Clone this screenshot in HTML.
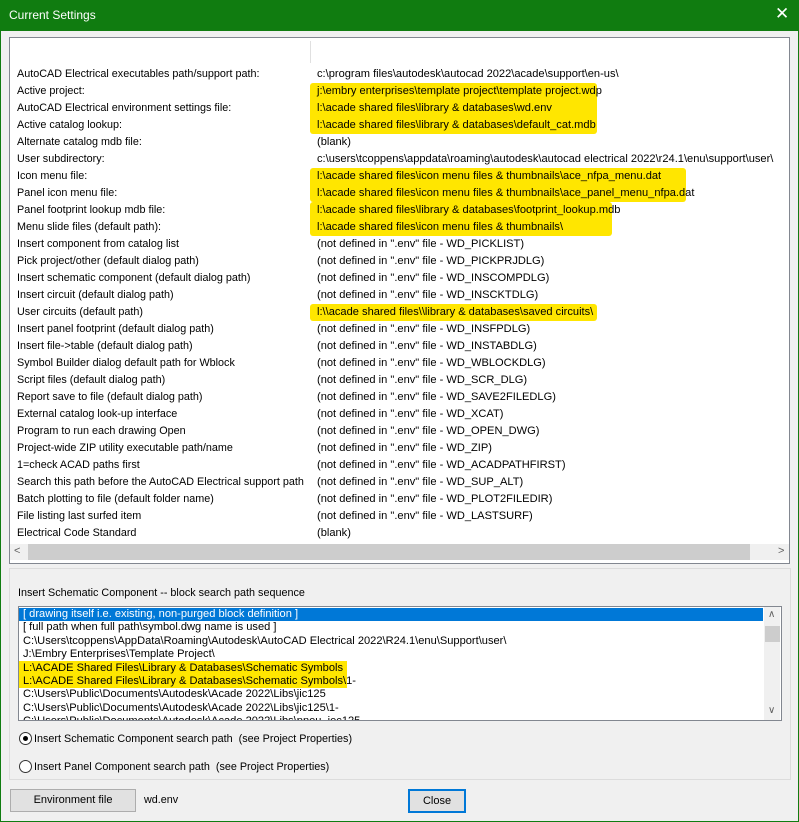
<!DOCTYPE html><html><head><style>
body{margin:0;width:799px;height:822px;background:#f0f0f0;font-family:"Liberation Sans",sans-serif;font-size:10.8px;color:#000;position:relative;overflow:hidden}
.a{position:absolute}
#title{left:0;top:0;width:799px;height:31px;background:#107c10;color:#fff;font-size:12px}
#frame{left:0;top:0;width:797px;height:820px;border:1px solid #107c10}
#box{left:9px;top:37px;width:779px;height:525px;background:#fff;border:1px solid #828790;overflow:hidden}
.r{position:absolute;left:7px;height:17px;line-height:17px;white-space:nowrap}
.v{position:absolute;left:300px;height:17px;line-height:17px;white-space:nowrap;padding-left:7px;font-size:11.1px}
.y{background:#ffe600}
#hs{left:10px;top:544px;width:779px;height:16px;background:#f0f0f0}
#grp{left:9px;top:568px;width:780px;height:210px;border:1px solid #dcdcdc}
#lb{left:18px;top:606px;width:762px;height:113px;background:#fff;border:1px solid #828790;overflow:hidden}
.l{position:absolute;left:2px;height:13.4px;line-height:13px;white-space:nowrap;font-size:11.1px;padding-left:2px}
.btn{position:absolute;background:#e1e1e1;border:1px solid #adadad;text-align:center;line-height:20px;font-size:11px}
.rad{position:absolute;width:11px;height:11px;border:1px solid #333;border-radius:50%;background:#fff}
</style></head><body>
<div class="a" id="frame"></div>
<div class="a" id="title"><span class="a" style="left:9px;top:8px">Current Settings</span><span class="a" style="left:775px;top:4px;font-size:17px">✕</span></div>
<div class="a" id="box">
<div class="a" style="left:300px;top:3px;width:1px;height:22px;background:#e0e0e0"></div>
<div class="a y" style="left:300px;top:45px;width:287px;height:51px;border-radius:3px"></div>
<div class="a y" style="left:300px;top:130px;width:376px;height:34px;border-radius:3px"></div>
<div class="a y" style="left:300px;top:164px;width:302px;height:34px;border-radius:3px"></div>
<div class="a y" style="left:300px;top:266px;width:287px;height:17px;border-radius:3px"></div>
<div class="r" style="top:28px">AutoCAD Electrical executables path/support path:</div><div class="v" style="top:28px">c:\program files\autodesk\autocad 2022\acade\support\en-us\</div>
<div class="r" style="top:45px">Active project:</div><div class="v" style="top:45px">j:\embry enterprises\template project\template project.wdp</div>
<div class="r" style="top:62px">AutoCAD Electrical environment settings file:</div><div class="v" style="top:62px">l:\acade shared files\library &amp; databases\wd.env</div>
<div class="r" style="top:79px">Active catalog lookup:</div><div class="v" style="top:79px">l:\acade shared files\library &amp; databases\default_cat.mdb</div>
<div class="r" style="top:96px">Alternate catalog mdb file:</div><div class="v" style="top:96px">(blank)</div>
<div class="r" style="top:113px">User subdirectory:</div><div class="v" style="top:113px">c:\users\tcoppens\appdata\roaming\autodesk\autocad electrical 2022\r24.1\enu\support\user\</div>
<div class="r" style="top:130px">Icon menu file:</div><div class="v" style="top:130px">l:\acade shared files\icon menu files &amp; thumbnails\ace_nfpa_menu.dat</div>
<div class="r" style="top:147px">Panel icon menu file:</div><div class="v" style="top:147px">l:\acade shared files\icon menu files &amp; thumbnails\ace_panel_menu_nfpa.dat</div>
<div class="r" style="top:164px">Panel footprint lookup mdb file:</div><div class="v" style="top:164px">l:\acade shared files\library &amp; databases\footprint_lookup.mdb</div>
<div class="r" style="top:181px">Menu slide files (default path):</div><div class="v" style="top:181px">l:\acade shared files\icon menu files &amp; thumbnails\</div>
<div class="r" style="top:198px">Insert component from catalog list</div><div class="v" style="top:198px">(not defined in ".env" file - WD_PICKLIST)</div>
<div class="r" style="top:215px">Pick project/other (default dialog path)</div><div class="v" style="top:215px">(not defined in ".env" file - WD_PICKPRJDLG)</div>
<div class="r" style="top:232px">Insert schematic component (default dialog path)</div><div class="v" style="top:232px">(not defined in ".env" file - WD_INSCOMPDLG)</div>
<div class="r" style="top:249px">Insert circuit (default dialog path)</div><div class="v" style="top:249px">(not defined in ".env" file - WD_INSCKTDLG)</div>
<div class="r" style="top:266px">User circuits (default path)</div><div class="v" style="top:266px">l:\\acade shared files\\library &amp; databases\saved circuits\</div>
<div class="r" style="top:283px">Insert panel footprint (default dialog path)</div><div class="v" style="top:283px">(not defined in ".env" file - WD_INSFPDLG)</div>
<div class="r" style="top:300px">Insert file-&gt;table (default dialog path)</div><div class="v" style="top:300px">(not defined in ".env" file - WD_INSTABDLG)</div>
<div class="r" style="top:317px">Symbol Builder dialog default path for Wblock</div><div class="v" style="top:317px">(not defined in ".env" file - WD_WBLOCKDLG)</div>
<div class="r" style="top:334px">Script files (default dialog path)</div><div class="v" style="top:334px">(not defined in ".env" file - WD_SCR_DLG)</div>
<div class="r" style="top:351px">Report save to file (default dialog path)</div><div class="v" style="top:351px">(not defined in ".env" file - WD_SAVE2FILEDLG)</div>
<div class="r" style="top:368px">External catalog look-up interface</div><div class="v" style="top:368px">(not defined in ".env" file - WD_XCAT)</div>
<div class="r" style="top:385px">Program to run each drawing Open</div><div class="v" style="top:385px">(not defined in ".env" file - WD_OPEN_DWG)</div>
<div class="r" style="top:402px">Project-wide ZIP utility executable path/name</div><div class="v" style="top:402px">(not defined in ".env" file - WD_ZIP)</div>
<div class="r" style="top:419px">1=check ACAD paths first</div><div class="v" style="top:419px">(not defined in ".env" file - WD_ACADPATHFIRST)</div>
<div class="r" style="top:436px">Search this path before the AutoCAD Electrical support path</div><div class="v" style="top:436px">(not defined in ".env" file - WD_SUP_ALT)</div>
<div class="r" style="top:453px">Batch plotting to file (default folder name)</div><div class="v" style="top:453px">(not defined in ".env" file - WD_PLOT2FILEDIR)</div>
<div class="r" style="top:470px">File listing last surfed item</div><div class="v" style="top:470px">(not defined in ".env" file - WD_LASTSURF)</div>
<div class="r" style="top:487px">Electrical Code Standard</div><div class="v" style="top:487px">(blank)</div>
</div>
<div class="a" id="hs"><div class="a" style="left:18px;top:0;width:722px;height:16px;background:#cdcdcd"></div><span class="a" style="left:4px;top:1px;color:#606060;font-size:11px">&lt;</span><span class="a" style="left:768px;top:1px;color:#606060;font-size:11px">&gt;</span></div>
<div class="a" id="grp"></div>
<div class="a" style="left:18px;top:587px">Insert Schematic Component -- block search path sequence</div>
<div class="a" id="lb">
<div class="a" style="left:0;top:1px;width:744px;height:13px;background:#0078d7"></div>
<div class="a" style="left:0;top:54px;width:328px;height:27px;background:#ffe600"></div>
<div class="l" style="top:1px;color:#fff">[ drawing itself i.e. existing, non-purged block definition ]</div>
<div class="l" style="top:14.4px">[ full path when full path\symbol.dwg name is used ]</div>
<div class="l" style="top:27.8px">C:\Users\tcoppens\AppData\Roaming\Autodesk\AutoCAD Electrical 2022\R24.1\enu\Support\user\</div>
<div class="l" style="top:41.2px">J:\Embry Enterprises\Template Project\</div>
<div class="l" style="top:54.6px">L:\ACADE Shared Files\Library &amp; Databases\Schematic Symbols</div>
<div class="l" style="top:68px">L:\ACADE Shared Files\Library &amp; Databases\Schematic Symbols\1-</div>
<div class="l" style="top:81.4px">C:\Users\Public\Documents\Autodesk\Acade 2022\Libs\jic125</div>
<div class="l" style="top:94.8px">C:\Users\Public\Documents\Autodesk\Acade 2022\Libs\jic125\1-</div>
<div class="l" style="top:108.2px">C:\Users\Public\Documents\Autodesk\Acade 2022\Libs\pneu_iec125</div>
<div class="a" style="left:745px;top:0;width:16px;height:113px;background:#f0f0f0"></div>
<div class="a" style="left:746px;top:19px;width:15px;height:16px;background:#cdcdcd"></div>
<span class="a" style="left:749px;top:2px;font-size:10px;color:#606060">∧</span>
<span class="a" style="left:749px;top:98px;font-size:10px;color:#606060">∨</span>
</div>
<div class="rad" style="left:19px;top:732px"><div class="a" style="left:3px;top:3px;width:5px;height:5px;border-radius:50%;background:#000"></div></div>
<div class="a" style="left:34px;top:733px">Insert Schematic Component search path&nbsp; (see Project Properties)</div>
<div class="rad" style="left:19px;top:760px"></div>
<div class="a" style="left:34px;top:761px">Insert Panel Component search path&nbsp; (see Project Properties)</div>
<div class="btn" style="left:10px;top:789px;width:124px;height:21px">Environment file</div>
<div class="a" style="left:144px;top:794px">wd.env</div>
<div class="btn" style="left:408px;top:789px;width:54px;height:20px;border:2px solid #0078d7">Close</div>
</body></html>
